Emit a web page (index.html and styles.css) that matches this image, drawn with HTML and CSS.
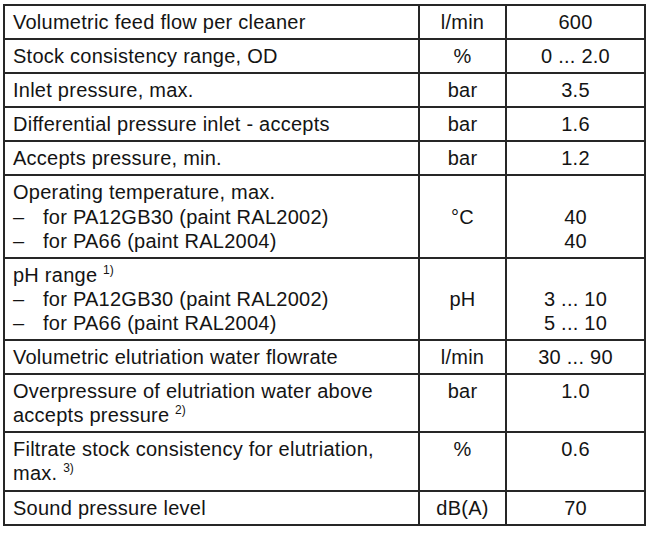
FILE: index.html
```html
<!DOCTYPE html>
<html lang="en">
<head>
<meta charset="utf-8">
<title>Technical data</title>
<link rel="stylesheet" href="styles.css">
</head>
<body>
<table class="spec">
  <colgroup>
    <col class="c-desc">
    <col class="c-unit">
    <col class="c-val">
  </colgroup>
  <tbody>
    <tr><td class="desc">Volumetric feed flow per cleaner</td><td class="unit">l/min</td><td class="val">600</td></tr>
    <tr><td class="desc">Stock consistency range, OD</td><td class="unit">%</td><td class="val">0 ... 2.0</td></tr>
    <tr><td class="desc">Inlet pressure, max.</td><td class="unit">bar</td><td class="val">3.5</td></tr>
    <tr><td class="desc">Differential pressure inlet - accepts</td><td class="unit">bar</td><td class="val">1.6</td></tr>
    <tr><td class="desc">Accepts pressure, min.</td><td class="unit">bar</td><td class="val">1.2</td></tr>
    <tr>
      <td class="desc">
        <div>Operating temperature, max.</div>
        <div class="item"><span class="dash">–</span><span>for PA12GB30 (paint RAL2002)</span></div>
        <div class="item"><span class="dash">–</span><span>for PA66 (paint RAL2004)</span></div>
      </td>
      <td class="unit"><div>&nbsp;</div><div>°C</div></td>
      <td class="val"><div>&nbsp;</div><div>40</div><div>40</div></td>
    </tr>
    <tr>
      <td class="desc">
        <div>pH range <sup>1)</sup></div>
        <div class="item"><span class="dash">–</span><span>for PA12GB30 (paint RAL2002)</span></div>
        <div class="item"><span class="dash">–</span><span>for PA66 (paint RAL2004)</span></div>
      </td>
      <td class="unit"><div>&nbsp;</div><div>pH</div></td>
      <td class="val"><div>&nbsp;</div><div>3 ... 10</div><div>5 ... 10</div></td>
    </tr>
    <tr><td class="desc">Volumetric elutriation water flowrate</td><td class="unit">l/min</td><td class="val">30 ... 90</td></tr>
    <tr><td class="desc">Overpressure of elutriation water above<br>accepts pressure <sup>2)</sup></td><td class="unit">bar</td><td class="val">1.0</td></tr>
    <tr><td class="desc">Filtrate stock consistency for elutriation,<br>max. <sup>3)</sup></td><td class="unit">%</td><td class="val">0.6</td></tr>
    <tr><td class="desc">Sound pressure level</td><td class="unit">dB(A)</td><td class="val">70</td></tr>
  </tbody>
</table>
</body>
</html>
```

FILE: styles.css
```css
html, body {
  margin: 0;
  padding: 0;
  background: #ffffff;
}

body {
  padding: 4px 0 0 3px;
  font-family: "Liberation Sans", Arial, Helvetica, sans-serif;
  color: #141414;
}

.spec {
  border-collapse: collapse;
  width: 641px;
  table-layout: fixed;
  font-size: 20px;
  letter-spacing: 0.25px;
  line-height: 24.1px;
}

.c-desc { width: 415px; }
.c-unit { width: 87px; }
.c-val { width: 139px; }

.spec td {
  border: 2px solid #262626;
  padding: 4px 8px 4px 8px;
  vertical-align: top;
}

.spec td.unit,
.spec td.val {
  text-align: center;
  padding-left: 2px;
  padding-right: 2px;
}

.item {
  display: flex;
}

.dash {
  width: 30px;
  flex: none;
}

sup {
  font-size: 12px;
  line-height: 0;
  vertical-align: 8px;
  letter-spacing: 0;
}
```
